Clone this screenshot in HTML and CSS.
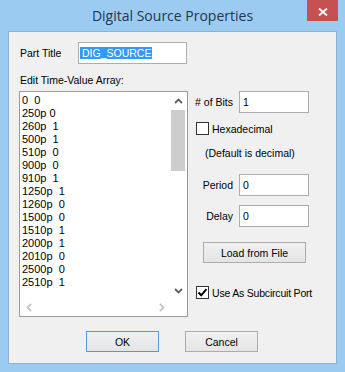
FILE: index.html
```html
<!DOCTYPE html>
<html>
<head>
<meta charset="utf-8">
<link rel="stylesheet" href="styles.css">
</head>
<body>
<div class="window">
  <div class="titlebar">
    <span class="title">Digital Source Properties</span>
    <div class="close">
      <svg width="10" height="8" viewBox="0 0 10 8"><path d="M1 0.5 L9 7.5 M9 0.5 L1 7.5" stroke="#fff" stroke-width="1.8" fill="none"/></svg>
    </div>
  </div>
  <div class="client">
    <div class="row-title">
      <span class="lbl part-lbl">Part Title</span>
      <div class="input title-input"><span class="sel">DIG_SOURCE</span></div>
    </div>
    <div class="lbl edit-lbl">Edit Time-Value Array:</div>
    <div class="main">
      <div class="listbox">
        <div class="list-text">0  0
250p 0
260p  1
500p  1
510p  0
900p  0
910p  1
1250p  1
1260p  0
1500p  0
1510p  1
2000p  1
2010p  0
2500p  0
2510p  1</div>
        <div class="vscroll">
          <div class="arrow"><svg width="9" height="6" viewBox="0 0 9 6"><polyline points="1,5 4.5,1.5 8,5" stroke="#606060" stroke-width="1.8" fill="none"/></svg></div>
          <div class="thumb"></div>
          <div class="track"></div>
          <div class="arrow"><svg width="9" height="6" viewBox="0 0 9 6"><polyline points="1,1 4.5,4.5 8,1" stroke="#606060" stroke-width="1.8" fill="none"/></svg></div>
        </div>
        <div class="hscroll">
          <div class="arrow"><svg width="6" height="9" viewBox="0 0 6 9"><polyline points="5,1 1.5,4.5 5,8" stroke="#c4c4c4" stroke-width="1.8" fill="none"/></svg></div>
          <div class="arrow"><svg width="6" height="9" viewBox="0 0 6 9"><polyline points="1,1 4.5,4.5 1,8" stroke="#c4c4c4" stroke-width="1.8" fill="none"/></svg></div>
        </div>
        <div class="corner"></div>
      </div>
      <div class="side">
        <div class="field">
          <span class="flbl">#&nbsp;of Bits</span>
          <div class="input">1</div>
        </div>
        <div class="check hex">
          <span class="box"></span>
          <span>Hexadecimal</span>
        </div>
        <div class="note">(Default is decimal)</div>
        <div class="field period">
          <span class="flbl">Period</span>
          <div class="input">0</div>
        </div>
        <div class="field delay">
          <span class="flbl">Delay</span>
          <div class="input">0</div>
        </div>
        <div class="btn load">Load from File</div>
        <div class="check port">
          <span class="box"><svg width="11" height="11" viewBox="0 0 11 11"><path d="M1.5 5.5 L4.2 8.3 L9.5 2.2" stroke="#000" stroke-width="2" fill="none"/></svg></span>
          <span class="port-lbl">Use As Subcircuit Port</span>
        </div>
      </div>
    </div>
    <div class="buttons">
      <div class="btn default">OK</div>
      <div class="btn">Cancel</div>
    </div>
  </div>
</div>
</body>
</html>
```
FILE: styles.css
```css
* { box-sizing: border-box; }
body {
  margin: 0;
  width: 345px;
  height: 372px;
  overflow: hidden;
  background: #9ccbf2;
  font-family: "Liberation Sans", Arial, sans-serif;
  font-size: 10.5px;
  color: #000;
}
.window {
  width: 345px;
  height: 372px;
  background: #9ccbf2;
  display: flex;
  flex-direction: column;
}
.titlebar {
  height: 31px;
  position: relative;
  display: flex;
  align-items: center;
  justify-content: center;
}
.title {
  font-family: "Open Sans", sans-serif;
  font-size: 14px;
  color: #24364d;
  line-height: 1;
  padding-top: 1px;
}
.close {
  position: absolute;
  top: 0;
  right: 7px;
  width: 31px;
  height: 21px;
  background: #c75050;
  display: flex;
  align-items: center;
  justify-content: center;
  padding-top: 2px;
}
.close svg { display: block; }
.client {
  margin: 0 8px;
  height: 333px;
  border: 1px solid #8db2d6;
  background: #f0f0f0;
  padding: 10px 0 0 10px;
  display: flex;
  flex-direction: column;
}
.row-title {
  display: flex;
  align-items: center;
  height: 22px;
}
.part-lbl { width: 59px; padding-left: 1px; }
.input {
  height: 22px;
  border: 1px solid #abadb3;
  background: #fff;
  display: flex;
  align-items: center;
  padding-left: 3px;
  line-height: 13px;
}
.title-input { width: 109px; padding-left: 1px; }
.sel {
  background: #3399ff;
  color: #fff;
  line-height: 12px;
  padding: 0 1px 0 2px;
}
.edit-lbl {
  margin-top: 10px;
  line-height: 13px;
  padding-left: 1px;
}
.main {
  display: flex;
  margin-top: 4px;
}
.listbox {
  width: 169px;
  height: 226px;
  border: 1px solid #9a9a9a;
  background: #fff;
  display: grid;
  grid-template-columns: 1fr 17px;
  grid-template-rows: 1fr 17px;
}
.list-text {
  padding: 2px 0 0 2px;
  font-size: 11px;
  line-height: 13px;
  white-space: pre;
  overflow: hidden;
}
.vscroll {
  display: flex;
  flex-direction: column;
}
.arrow {
  width: 17px;
  height: 17px;
  display: flex;
  align-items: center;
  justify-content: center;
}
.arrow svg { display: block; }
.thumb {
  margin: 1px 2px 0 1px;
  height: 61px;
  background: #cdcdcd;
}
.track { flex: 1; }
.hscroll {
  display: flex;
  justify-content: space-between;
}
.side {
  margin-left: 6px;
  width: 128px;
  display: flex;
  flex-direction: column;
}
.field {
  display: grid;
  grid-template-columns: 45px 70px;
  align-items: center;
  height: 22px;
}
.flbl {
  text-align: right;
  padding-right: 6px;
}
.check {
  display: flex;
  align-items: center;
  gap: 3px;
  padding-left: 2px;
  height: 13px;
  white-space: nowrap;
}
.box {
  flex: none;
  width: 13px;
  height: 13px;
  border: 1px solid #333;
  background: #fff;
  display: flex;
  align-items: center;
  justify-content: center;
}
.box svg { display: block; }
.hex { margin-top: 9px; }
.note {
  margin-top: 12px;
  padding-left: 11px;
  line-height: 13px;
}
.period { margin-top: 14px; }
.delay { margin-top: 9px; }
.btn {
  width: 73px;
  height: 21px;
  border: 1px solid #acacac;
  background: linear-gradient(#f0f0f0, #e5e5e5);
  display: flex;
  align-items: center;
  justify-content: center;
}
.load {
  margin-top: 15px;
  margin-left: 9px;
  width: 103px;
}
.port { margin-top: 23px; }
.port-lbl { letter-spacing: -0.2px; }
.buttons {
  display: flex;
  gap: 26px;
  margin-top: 14px;
  padding-left: 67px;
}
.btn.default { border-color: #4d9ae0; }
```
